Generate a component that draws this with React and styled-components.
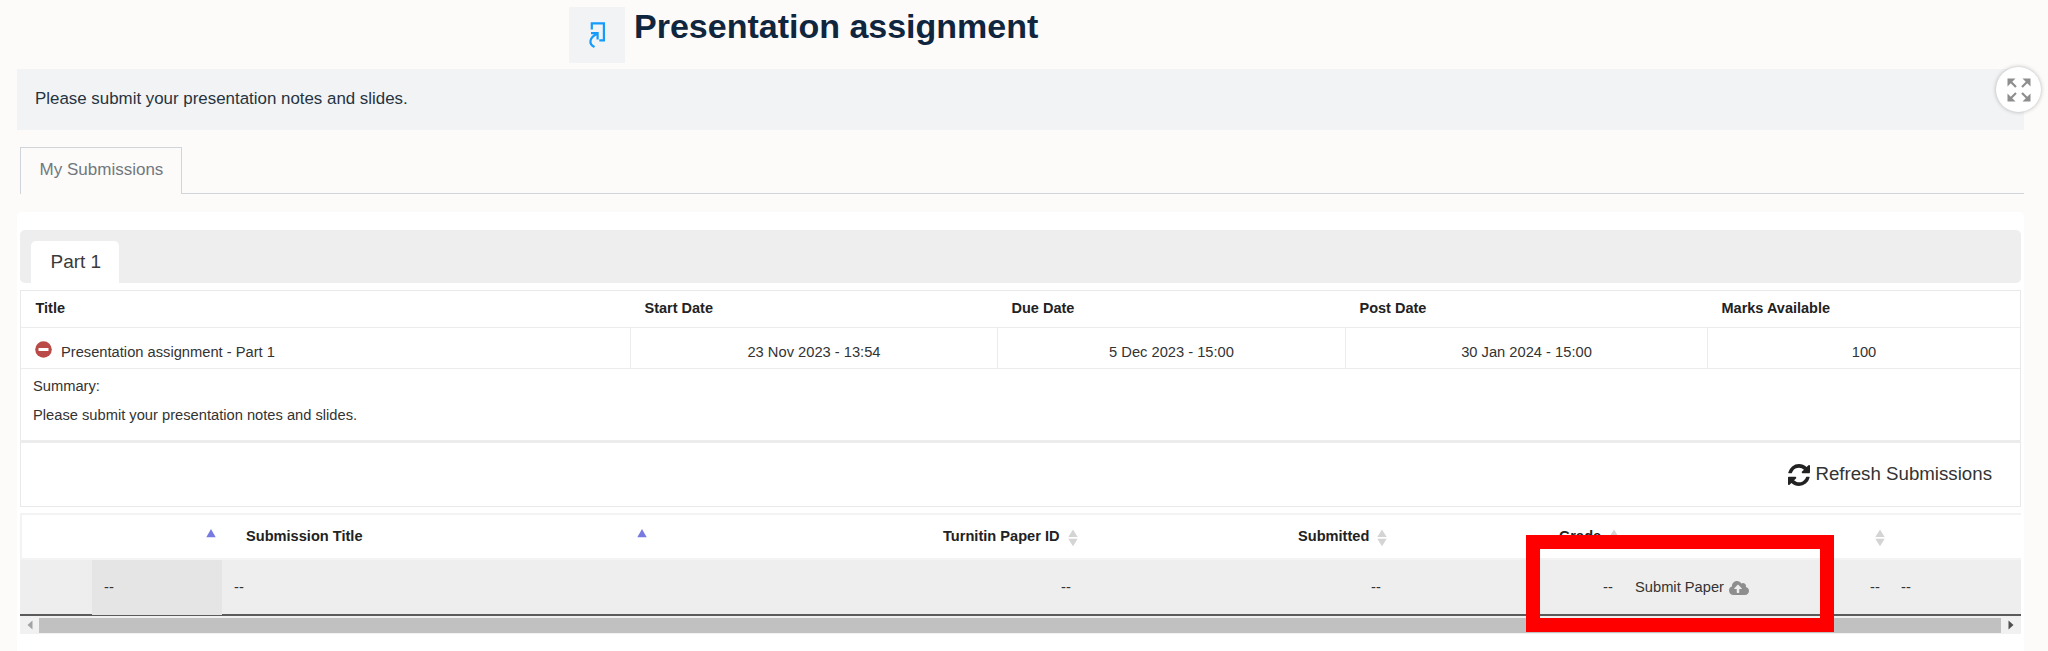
import React from 'react';
import styled, { createGlobalStyle } from 'styled-components';
import { FaCloudUploadAlt } from 'react-icons/fa';

const GlobalStyle = createGlobalStyle`
  * { box-sizing: border-box; }
  body { margin: 0; background: #fdfbf9; font-family: "Liberation Sans", Arial, sans-serif; overflow: hidden; }
`;

const Page = styled.main`
  position: relative;
  width: 2048px;
  height: 651px;
  padding: 7px 24px 0 17px;
  display: flex;
  flex-direction: column;
  overflow: hidden;
`;

const Header = styled.header`
  display: flex;
  gap: 9px;
  height: 62px;
  padding-left: 552px;
`;

const IconTile = styled.div`
  width: 56px;
  height: 56px;
  background: #f2f3f5;
  svg { display: block; }
`;

const Heading = styled.h1`
  margin: 0;
  font-size: 34px;
  line-height: 39px;
  color: #10263f;
  white-space: nowrap;
`;

const Description = styled.section`
  height: 61px;
  flex: none;
  padding-left: 18px;
  background: #f1f3f5;
  color: #26333f;
  font-size: 16.9px;
  line-height: 60px;
`;

const PageTabs = styled.nav`
  display: flex;
  flex: none;
  height: 47px;
  margin: 17px 0 18px;
  padding-left: 3px;
  align-items: stretch;
  &::after { content: ""; flex: 1; border-bottom: 1px solid #cfd5d9; }
`;

const PageTab = styled.div`
  width: 162px;
  padding-left: 1px;
  border: 1px solid #cfd5d9;
  border-bottom: 0;
  color: #717880;
  font-size: 17px;
  line-height: 44px;
  text-align: center;
`;

const Panel = styled.section`
  flex: 1;
  background: #fff;
  border-radius: 5px 5px 0 0;
  padding: 18px 3px 0 3px;
  display: flex;
  flex-direction: column;
`;

const PartBar = styled.nav`
  flex: none;
  display: flex;
  align-items: flex-end;
  height: 53px;
  margin-bottom: 7px;
  padding-left: 11px;
  background: #eeeeee;
  border-radius: 5px;
`;

const PartTab = styled.div`
  width: 88px;
  height: 42px;
  padding-left: 19.5px;
  background: #fff;
  border-radius: 5px 5px 0 0;
  color: #3a3a3a;
  font-size: 19px;
  line-height: 41px;
`;

const PartTable = styled.section`
  flex: none;
  border: 1px solid #e9e9e9;
  border-bottom: 0;
  font-size: 14.7px;
  color: #333;
`;

const PartRow = styled.div`
  display: grid;
  grid-template-columns: 609px 367px 348px 362px 1fr;
  height: ${({ $head }) => ($head ? 37 : 41)}px;
  border-bottom: 1px solid #ececec;
`;

const HeadCell = styled.div`
  padding-left: 14.5px;
  font-weight: bold;
  color: #222;
  line-height: 35px;
  font-size: 14.5px;
`;

const DataCell = styled.div`
  display: flex;
  align-items: center;
  justify-content: ${({ $first }) => ($first ? 'flex-start' : 'center')};
  padding: 7px 0 0 ${({ $first }) => ($first ? 14 : 0)}px;
  border-left: ${({ $first }) => ($first ? '0' : '1px solid #ececec')};
  gap: 9px;
  svg { margin-top: -5px; }
`;

const Summary = styled.div`
  height: 71px;
  padding: 3px 0 0 12px;
  line-height: 29.3px;
`;

const RefreshBar = styled.div`
  flex: none;
  display: flex;
  justify-content: flex-end;
  gap: 5px;
  height: 67px;
  padding: 20px 28px 0 0;
  border: 1px solid #e9e9e9;
  border-top: 3px solid #ececec;
  color: #333;
  font-size: 18.7px;
  line-height: 22px;
  svg { margin-top: 1px; }
`;

const Submissions = styled.section`
  margin-top: 6px;
  font-size: 14.7px;
  color: #333;
`;

const SubHead = styled.div`
  display: grid;
  grid-template-columns: 72px 152px 692px 355px 261px 290px 1fr;
  height: 47px;
  border: 2px solid #f3f3f3;
  border-right: 0;
  font-weight: bold;
  font-size: 14.6px;
  color: #222;
`;

const SubHeadCell = styled.div`
  display: flex;
  align-items: flex-start;
  padding: ${({ $pad }) => `0 0 0 ${$pad || 0}px`};
  gap: ${({ $gap }) => $gap || 8}px;
  line-height: 42px;
  height: 42px;
  white-space: nowrap;
  svg { flex: none; margin-top: 14px; }
`;

const SubRow = styled.div`
  display: grid;
  grid-template-columns: 72px 130px 827px 310px 232px 32px 235px 31px 1fr;
  height: 54px;
  background: #eeeeee;
  line-height: 55px;
`;

const SubCell = styled.div`
  padding-left: 12px;
  background: ${({ $sorted }) => ($sorted ? '#e5e5e5' : 'transparent')};
  white-space: nowrap;
`;

const SubmitLink = styled.span`
  display: flex;
  align-items: center;
  gap: 5px;
  svg { color: #8e8e8e; flex: none; }
`;

const ScrollBar = styled.div`
  display: flex;
  align-items: center;
  height: 20px;
  border-top: 2px solid #5b5b5b;
  background: #f1f1f1;
`;

const ScrollArrow = styled.div`
  width: ${({ $right }) => ($right ? 20 : 19)}px;
  display: flex;
  justify-content: center;
  color: ${({ $right }) => ($right ? '#505050' : '#a3a3a3')};
`;

const ScrollThumb = styled.div`
  flex: 1;
  height: 15px;
  background: #c1c1c1;
`;

const ExpandButton = styled.button`
  position: absolute;
  left: 1996px;
  top: 67px;
  width: 45px;
  height: 45px;
  padding: 0;
  display: flex;
  align-items: center;
  justify-content: center;
  border: 0;
  border-radius: 50%;
  background: #fff;
  box-shadow: 0 0 4px rgba(0, 0, 0, 0.28);
`;

const Highlight = styled.div`
  position: absolute;
  left: 1526px;
  top: 535px;
  width: 308px;
  height: 97px;
  border: 14px solid #ff0000;
`;

const LinkIcon = () => (
  <svg width="56" height="56" viewBox="0 0 56 56" fill="none" stroke="#149bfb" strokeWidth="2.200">
    <path d="M22.800 22.500V16.300H34.900V33.300H30.300" />
    <path d="M22 26.200H28.600V32.600M28.400 26.400C20.500 30.500 19 36.500 25.500 40" />
  </svg>
);

const ExpandIcon = () => (
  <svg width="24" height="24" viewBox="0 0 24 24" fill="#8e8e8e" stroke="#8e8e8e" strokeWidth="2.200">
    <path stroke="none" d="M0.500 0.500H8.500L0.500 8.500ZM23.500 0.500V8.500L15.500 0.500ZM0.500 23.500V15.500L8.500 23.500ZM23.500 23.500H15.500L23.500 15.500Z" />
    <path d="M3 3L9 9M21 3L15 9M3 21L9 15M21 21L15 15" />
  </svg>
);

const MinusIcon = () => (
  <svg width="17" height="17" viewBox="0 0 17 17">
    <circle cx="8.500" cy="8.500" r="8.300" fill="#b94a48" />
    <rect x="3.500" y="7" width="10" height="3" rx="0.500" fill="#fff" />
  </svg>
);

const RefreshIcon = () => (
  <svg width="22" height="22" viewBox="0 0 1536 1536" fill="#222">
    <path d="M1511 928q0 5-1 7-64 268-268 434.500T764 1536q-146 0-282.500-55T238 1324l-129 129q-19 19-45 19t-45-19-19-45V960q0-26 19-45t45-19h448q26 0 45 19t19 45-19 45l-137 137q71 66 161 102t187 36q134 0 250-65t186-179q11-17 53-117 8-23 30-23h192q13 0 22.500 9.500t9.500 22.500zm25-800v448q0 26-19 45t-45 19h-448q-26 0-45-19t-19-45 19-45l138-138Q969 256 768 256q-134 0-250 65T332 500q-11 17-53 117-8 23-30 23H50q-13 0-22.500-9.500T18 608v-7q65-268 270-434.500T768 0q146 0 284 55.500T1297 212l130-129q19-19 45-19t45 19 19 45z" />
  </svg>
);

const SortIcon = () => (
  <svg width="10" height="18" viewBox="0 0 10 18" fill="#d4d4d4">
    <path d="M5 0.500L9.700 8H0.300ZM0.300 9.700H9.700L5 17.200Z" />
  </svg>
);

const SortedIcon = () => (
  <svg width="10" height="18" viewBox="0 0 10 18" fill="#777ae0">
    <path d="M5 0L9.700 8.200H0.300Z" />
  </svg>
);

const Arrow = ({ right }) => (
  <svg width="6" height="10" viewBox="0 0 6 10" fill="currentColor">
    <path d={right ? 'M0.500 0.500V9.500L5.500 5Z' : 'M5.500 0.500V9.500L0.500 5Z'} />
  </svg>
);

export default function App() {
  return (
    <>
      <GlobalStyle />
      <Page>
        <Header>
          <IconTile><LinkIcon /></IconTile>
          <Heading>Presentation assignment</Heading>
        </Header>
        <Description>Please submit your presentation notes and slides.</Description>
        <PageTabs><PageTab>My Submissions</PageTab></PageTabs>
        <Panel>
          <PartBar><PartTab>Part 1</PartTab></PartBar>
          <PartTable>
            <PartRow $head>
              <HeadCell>Title</HeadCell>
              <HeadCell>Start Date</HeadCell>
              <HeadCell>Due Date</HeadCell>
              <HeadCell>Post Date</HeadCell>
              <HeadCell>Marks Available</HeadCell>
            </PartRow>
            <PartRow>
              <DataCell $first><MinusIcon />Presentation assignment - Part 1</DataCell>
              <DataCell>23 Nov 2023 - 13:54</DataCell>
              <DataCell>5 Dec 2023 - 15:00</DataCell>
              <DataCell>30 Jan 2024 - 15:00</DataCell>
              <DataCell>100</DataCell>
            </PartRow>
            <Summary>
              <div>Summary:</div>
              <div>Please submit your presentation notes and slides.</div>
            </Summary>
          </PartTable>
          <RefreshBar><RefreshIcon />Refresh Submissions</RefreshBar>
          <Submissions>
            <SubHead>
              <SubHeadCell />
              <SubHeadCell $pad={112}><SortedIcon /></SubHeadCell>
              <SubHeadCell $gap={274}>Submission Title<SortedIcon /></SubHeadCell>
              <SubHeadCell $pad={5}>Turnitin Paper ID<SortIcon /></SubHeadCell>
              <SubHeadCell $pad={5}>Submitted<SortIcon /></SubHeadCell>
              <SubHeadCell $pad={5}>Grade<SortIcon /></SubHeadCell>
              <SubHeadCell $pad={31}><SortIcon /></SubHeadCell>
            </SubHead>
            <SubRow>
              <SubCell />
              <SubCell $sorted>--</SubCell>
              <SubCell>--</SubCell>
              <SubCell>--</SubCell>
              <SubCell>--</SubCell>
              <SubCell>--</SubCell>
              <SubCell><SubmitLink>Submit Paper<FaCloudUploadAlt size={20} /></SubmitLink></SubCell>
              <SubCell>--</SubCell>
              <SubCell>--</SubCell>
            </SubRow>
            <ScrollBar>
              <ScrollArrow><Arrow /></ScrollArrow>
              <ScrollThumb />
              <ScrollArrow $right><Arrow right /></ScrollArrow>
            </ScrollBar>
          </Submissions>
        </Panel>
        <ExpandButton aria-label="Expand"><ExpandIcon /></ExpandButton>
        <Highlight />
      </Page>
    </>
  );
}
